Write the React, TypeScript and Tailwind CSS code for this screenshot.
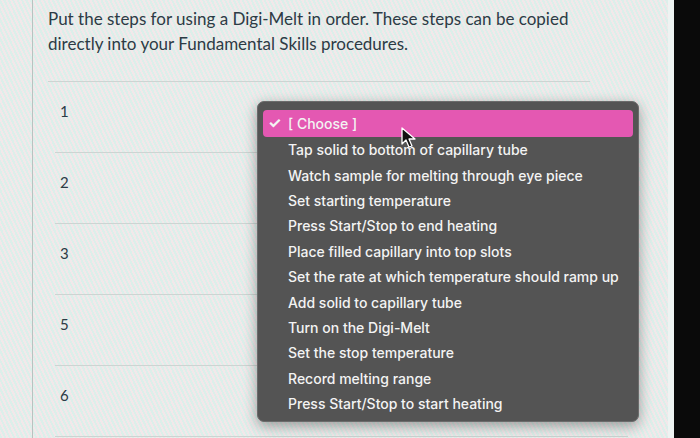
import React from "react";

const options = [
  "Tap solid to bottom of capillary tube",
  "Watch sample for melting through eye piece",
  "Set starting temperature",
  "Press Start/Stop to end heating",
  "Place filled capillary into top slots",
  "Set the rate at which temperature should ramp up",
  "Add solid to capillary tube",
  "Turn on the Digi-Melt",
  "Set the stop temperature",
  "Record melting range",
  "Press Start/Stop to start heating",
];

const rows = ["1", "2", "3", "5", "6"];

function Cursor() {
  return (
    <svg width="16" height="22" viewBox="0 0 16 22" className="absolute left-[401px] top-[127px]">
      <path d="M1 1 L1 17 L5 13 L8 20 L11 19 L8 12 L14 12 Z" fill="#111" stroke="#fff" strokeWidth="1.3" strokeLinejoin="round" />
    </svg>
  );
}

export default function App() {
  return (
    <div className="relative flex h-[438px] w-[700px] overflow-hidden bg-[#e5ece9] bg-[repeating-linear-gradient(65deg,#dcefea_0px,#dcefea_2px,#f2e8ea_2px,#f2e8ea_4px)] font-['Lato',sans-serif] text-[#2d3b45]">
      {/* page gutter */}
      <div className="w-[33px] shrink-0 border-r border-[#b9c2c0]" />

      <div className="flex-1 pl-[15px] pr-[40px]">
        <div className="mr-[38px] border-b border-[#cdd4d2] pt-[6px] pb-[25px] text-[17px] leading-[25px]">
          Put the steps for using a Digi-Melt in order. These steps can be copied directly into your Fundamental Skills procedures.
        </div>

        <div className="pl-[7px]">
          {rows.map((n) => (
            <div key={n} className="h-[71px] border-b border-[#cdd4d2] pl-[5px] pt-[20px] text-[15px] leading-[18px]">
              {n}
            </div>
          ))}
        </div>
      </div>

      {/* monitor bezel */}
      <div className="w-[32px] shrink-0 border-l-[6px] border-[#eef3f2] bg-[#0a0a0a]" />

      {/* open select menu */}
      <div className="absolute left-[257px] top-[101px] w-[382px] rounded-[7px] border border-[#6b6b6b] bg-[#545454] px-[5px] pt-[8px] pb-[5px] font-['Inter',sans-serif] text-[14px] font-medium text-[#f3f3f3] shadow-[0_4px_14px_rgba(0,0,0,0.35)]">
        <div className="flex h-[27px] items-center rounded-[4px] bg-[#e458b2]">
          <span className="w-[25px] pl-[5px] text-[15px] font-bold">✓</span>
          <span>[ Choose ]</span>
        </div>
        {options.map((o) => (
          <div key={o} className="flex h-[25.4px] items-center pl-[25px]">
            {o}
          </div>
        ))}
      </div>

      <Cursor />
    </div>
  );
}
